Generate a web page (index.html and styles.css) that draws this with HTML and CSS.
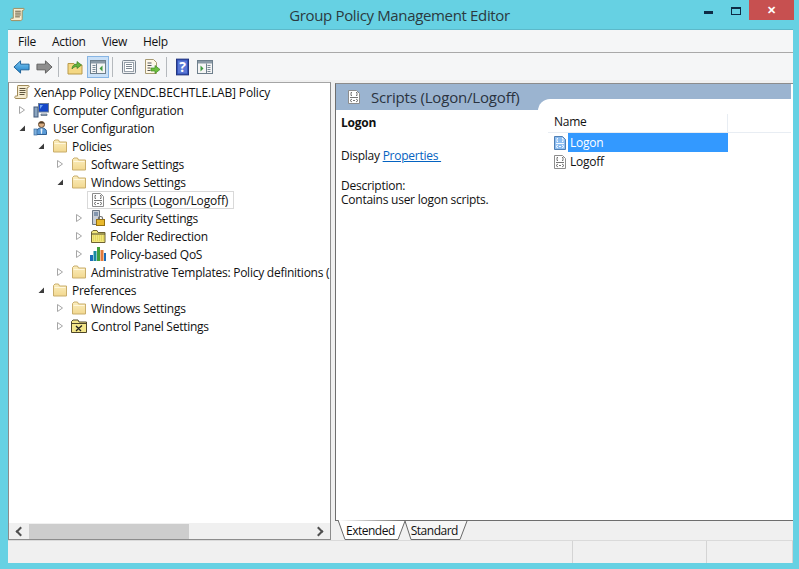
FILE: index.html
```html
<!DOCTYPE html>
<html lang="en">

<head>
    <meta charset="UTF-8">
    <title>Group Policy Management Editor</title>
    <link rel="stylesheet" href="styles.css">
</head>

<body>

    <!-- icon set -->
    <svg class="defs" width="0" height="0">
        <defs>
            <linearGradient id="blueArrow" x1="0" y1="0" x2="0" y2="1">
                <stop offset="0" stop-color="#7cc8f2" />
                <stop offset="1" stop-color="#1c7fc8" />
            </linearGradient>
            <linearGradient id="folderFill" x1="0" y1="0" x2="0" y2="1">
                <stop offset="0" stop-color="#fbeebf" />
                <stop offset="1" stop-color="#f2d88f" />
            </linearGradient>
        </defs>
        <symbol id="i-scroll" viewBox="0 0 16 16">
            <path d="M4 1.5h10.500c.8 0 1 1 .3 1.500L13 4v8.500c0 1.500-1 2-2 2H2c-1.500 0-1.800-2-.3-2.500H3.500V3C3.500 2 3.500 1.500 4 1.500z" fill="#f6ecd0" stroke="#a08a58" />
            <path d="M5.500 4.500h6M5.500 6.500h6M5.500 8.500h6M5.500 10.500h5" stroke="#5f563f" />
        </symbol>
        <symbol id="i-folder" viewBox="0 0 16 16">
            <path d="M1.500 3.500V14h13V4h-7l-1-2H3z" fill="url(#folderFill)" stroke="#c9ad6b" />
            <path d="M2.500 5.500h11" stroke="#fff7dc" />
        </symbol>
        <symbol id="i-script" viewBox="0 0 16 16">
            <path d="M2.500 1.500h8l3 3v10h-11z" fill="#fff" stroke="#8d8d8d" />
            <path d="M6 3.500H5v3h1M10 3.500h1v3h-1M4 8.500h8M6 10l-2 1.500L6 13M10 10l2 1.500-2 1.500M7 11.500h2" fill="none" stroke="#666" stroke-width=".9" />
        </symbol>
        <symbol id="i-script-sel" viewBox="0 0 16 16">
            <path d="M2.500 1.500h8l3 3v10h-11z" fill="#8dbdf0" stroke="#4f7fb5" />
            <path d="M6 3.500H5v3h1M10 3.500h1v3h-1M4 8.500h8M6 10l-2 1.500L6 13M10 10l2 1.500-2 1.500M7 11.500h2" fill="none" stroke="#fff" stroke-width=".9" />
        </symbol>
        <symbol id="i-computer" viewBox="0 0 16 16">
            <rect x="1" y="5" width="4" height="10" fill="#8ba5bf" stroke="#41597a" />
            <rect x="5.500" y="1.500" width="10" height="8.500" fill="#1447c8" stroke="#6d7f95" />
            <path d="M7 3h3l-3 4z" fill="#6ea5f5" />
            <path d="M8 12h6v1.500H8z" fill="#9fb0c2" stroke="#52657c" stroke-width=".7" />
        </symbol>
        <symbol id="i-user" viewBox="0 0 16 16">
            <circle cx="8.500" cy="4.500" r="3" fill="#d7ac82" stroke="#6b4c2f" />
            <path d="M5.500 3.500c1-2.500 5-2.500 6 0z" fill="#4d3a26" />
            <path d="M3.500 14.500v-3c0-2 2-3.500 5-3.500s5 1.500 5 3.500v3z" fill="#5a9ad6" stroke="#2f5f92" />
            <path d="M7.500 8.500h2L9 13.500l-.5.5-.5-.5z" fill="#e8f2fb" />
            <rect x="1" y="9" width="3" height="6" fill="#7fb0dc" stroke="#3a6c9e" stroke-width=".7" />
        </symbol>
        <symbol id="i-security" viewBox="0 0 16 16">
            <path d="M2.500 .5h7v14h-7z" fill="#c8ced6" stroke="#6b7683" />
            <path d="M4 3h4M4 5h4" stroke="#3f5f86" />
            <rect x="6.500" y="9.500" width="8" height="6" fill="#e8b92e" stroke="#96700f" />
            <path d="M8.500 9.500V8c0-2 4-2 4 0v1.500" fill="none" stroke="#6f6f6f" stroke-width="1.200" />
        </symbol>
        <symbol id="i-redirect" viewBox="0 0 16 16">
            <path d="M1.500 4v10.500H15v-10H8l-1-2H3z" fill="#f1e77c" stroke="#6e6232" />
            <path d="M1.500 6H15" stroke="#4f4a2b" />
            <path d="M3 8h11M3 10h11M3 12h11" stroke="#d6c645" stroke-dasharray="1 1" />
        </symbol>
        <symbol id="i-qos" viewBox="0 0 16 16">
            <rect x="0" y="9" width="3" height="6" fill="#1b6cb8" />
            <rect x="3.500" y="5" width="3" height="10" fill="#178a9e" />
            <rect x="7" y="1" width="3" height="14" fill="#3e9e3c" />
            <rect x="10.500" y="4" width="3" height="11" fill="#e27a3c" />
            <rect x="14" y="7" width="2" height="8" fill="#1b6cb8" />
        </symbol>
        <symbol id="i-panel" viewBox="0 0 16 16">
            <path d="M.5 3.500v11h15V4H8L7 2H2z" fill="#f3e68a" stroke="#4d4528" />
            <path d="M1 5.500h14" stroke="#4d4528" />
            <path d="M5 8l2.500 2.500L11 7.500M7.500 10.500l2.500 2.500M5 13l2.500-2.500" fill="none" stroke="#222" stroke-width="1.300" />
        </symbol>
        <symbol id="i-back" viewBox="0 0 18 16">
            <path d="M1 8l7-6.500V5h9v6H8v3.500z" fill="url(#blueArrow)" stroke="#1a5f96" />
        </symbol>
        <symbol id="i-forward" viewBox="0 0 18 16">
            <path d="M17 8l-7-6.500V5H1v6h9v3.500z" fill="#8e8e8e" stroke="#5f5f5f" />
        </symbol>
        <symbol id="i-up" viewBox="0 0 16 16">
            <path d="M1 4.500V15h14V6H8L7 4.500z" fill="#f4d884" stroke="#b99a4a" />
            <path d="M5 10c0-3 2-5 5-5V2.500L14.500 6 10 9.500v-2c-2 0-4 1-5 2.500z" fill="#63b33c" stroke="#3d7d25" stroke-width=".7" />
        </symbol>
        <symbol id="i-pane" viewBox="0 0 16 14">
            <rect x=".5" y=".5" width="15" height="13" fill="#f5f5f5" stroke="#6e7f8c" />
            <rect x="1" y="1" width="14" height="2.500" fill="#8b9aa6" />
            <path d="M2.500 5.500h3M2.500 7.500h3M2.500 9.500h3M2.500 11.500h3" stroke="#7a8a96" />
            <path d="M6.500 3.500v10" stroke="#6e7f8c" />
            <path d="M12.500 5.500v6l-3-3z" fill="#3f9a3f" />
        </symbol>
        <symbol id="i-pane-right" viewBox="0 0 16 14">
            <rect x=".5" y=".5" width="15" height="13" fill="#f5f5f5" stroke="#6e7f8c" />
            <rect x="1" y="1" width="14" height="2.500" fill="#8b9aa6" />
            <path d="M10.500 5.500h3M10.500 7.500h3M10.500 9.500h3M10.500 11.500h3" stroke="#7a8a96" />
            <path d="M9.500 3.500v10" stroke="#6e7f8c" />
            <path d="M3.500 5.500v6l3-3z" fill="#3f9a3f" />
        </symbol>
        <symbol id="i-props" viewBox="0 0 16 16">
            <rect x="1.500" y="1.500" width="13" height="13" rx="1" fill="#eef0f2" stroke="#7d8791" />
            <rect x="3.500" y="3.500" width="9" height="9" fill="#fff" stroke="#9aa3ac" />
            <path d="M5 5.500h6M5 7.500h6M5 9.500h6" stroke="#7d8791" />
        </symbol>
        <symbol id="i-export" viewBox="0 0 16 16">
            <path d="M1.500 .5h8l3 3v5M12.500 13.500v1h-11V.5" fill="#fff8e6" stroke="#a79a72" />
            <path d="M3.500 4h4M3.500 6.500h4M3.500 9h3M3.500 11.500h3" stroke="#555" />
            <path d="M7 9h4V6.500l5 4-5 4V12H7z" fill="#6dbf3f" stroke="#3f8a22" stroke-width=".7" />
        </symbol>
        <symbol id="i-help" viewBox="0 0 14 18">
            <rect x=".5" y=".5" width="13" height="17" fill="#2e4fb5" stroke="#1c2f7a" />
            <rect x="2" y="2" width="10" height="14" fill="#5b78d6" />
        </symbol>
        <symbol id="i-open" viewBox="0 0 10 10">
            <path d="M8 2.500V8H2.500z" fill="#3c3c3c" />
        </symbol>
        <symbol id="i-closed" viewBox="0 0 10 10">
            <path d="M2.500 1.500l5 3.500-5 3.500z" fill="#fff" stroke="#a6a6a6" />
        </symbol>
    </svg>

    <div class="window">

        <div class="titlebar">
            <svg class="title-icon"><use href="#i-scroll" /></svg>
            <div class="title-text">Group Policy Management Editor</div>
            <div class="title-buttons">
                <span class="btn-min"></span>
                <span class="btn-max"></span>
                <span class="btn-close">&#10005;</span>
            </div>
        </div>

        <div class="client">

            <div class="menubar">
                <span>File</span>
                <span>Action</span>
                <span>View</span>
                <span>Help</span>
            </div>

            <div class="toolbar">
                <svg class="tool tool-arrow"><use href="#i-back" /></svg>
                <svg class="tool tool-arrow tool-forward"><use href="#i-forward" /></svg>
                <span class="sep"></span>
                <svg class="tool tool-up"><use href="#i-up" /></svg>
                <span class="tool-active"><svg class="tool-pane"><use href="#i-pane" /></svg></span>
                <span class="sep sep-tight"></span>
                <svg class="tool tool-props"><use href="#i-props" /></svg>
                <svg class="tool tool-export"><use href="#i-export" /></svg>
                <span class="sep sep-help"></span>
                <span class="tool-help"><svg><use href="#i-help" /></svg><b>?</b></span>
                <svg class="tool-pane tool-last"><use href="#i-pane-right" /></svg>
            </div>

            <div class="panes">

                <div class="left-pane">
                    <div class="tree">
                        <div class="row root"><svg class="icon"><use href="#i-scroll" /></svg><span>XenApp Policy [XENDC.BECHTLE.LAB] Policy</span></div>
                        <div class="row l1"><svg class="arrow"><use href="#i-closed" /></svg><svg class="icon"><use href="#i-computer" /></svg><span>Computer Configuration</span></div>
                        <div class="row l1"><svg class="arrow"><use href="#i-open" /></svg><svg class="icon"><use href="#i-user" /></svg><span>User Configuration</span></div>
                        <div class="row l2"><svg class="arrow"><use href="#i-open" /></svg><svg class="icon"><use href="#i-folder" /></svg><span>Policies</span></div>
                        <div class="row l3"><svg class="arrow"><use href="#i-closed" /></svg><svg class="icon"><use href="#i-folder" /></svg><span>Software Settings</span></div>
                        <div class="row l3"><svg class="arrow"><use href="#i-open" /></svg><svg class="icon"><use href="#i-folder" /></svg><span>Windows Settings</span></div>
                        <div class="row l4"><span class="no-arrow"></span><span class="current"><svg class="icon"><use href="#i-script" /></svg><span>Scripts (Logon/Logoff)</span></span></div>
                        <div class="row l4"><svg class="arrow"><use href="#i-closed" /></svg><svg class="icon"><use href="#i-security" /></svg><span>Security Settings</span></div>
                        <div class="row l4"><svg class="arrow"><use href="#i-closed" /></svg><svg class="icon"><use href="#i-redirect" /></svg><span>Folder Redirection</span></div>
                        <div class="row l4"><svg class="arrow"><use href="#i-closed" /></svg><svg class="icon"><use href="#i-qos" /></svg><span>Policy-based QoS</span></div>
                        <div class="row l3"><svg class="arrow"><use href="#i-closed" /></svg><svg class="icon"><use href="#i-folder" /></svg><span>Administrative Templates: Policy definitions (</span></div>
                        <div class="row l2"><svg class="arrow"><use href="#i-open" /></svg><svg class="icon"><use href="#i-folder" /></svg><span>Preferences</span></div>
                        <div class="row l3"><svg class="arrow"><use href="#i-closed" /></svg><svg class="icon"><use href="#i-folder" /></svg><span>Windows Settings</span></div>
                        <div class="row l3"><svg class="arrow"><use href="#i-closed" /></svg><svg class="icon"><use href="#i-panel" /></svg><span>Control Panel Settings</span></div>
                    </div>
                    <div class="hscroll">
                        <span class="chevron chevron-left"></span>
                        <div class="track"><div class="thumb"></div></div>
                        <span class="chevron chevron-right"></span>
                    </div>
                </div>

                <div class="right-pane">
                    <div class="detail">
                        <div class="band">
                            <svg class="icon"><use href="#i-script" /></svg>
                            <span>Scripts (Logon/Logoff)</span>
                        </div>
                        <div class="detail-body">
                            <div class="extended">
                                <div class="ext-name">Logon</div>
                                <div class="ext-display">Display <a href="#">Properties&nbsp;</a></div>
                                <div class="ext-desc">Description:<br>Contains user logon scripts.</div>
                            </div>
                            <div class="list">
                                <div class="list-head"><div class="col-name">Name</div></div>
                                <div class="item selected"><svg class="icon"><use href="#i-script-sel" /></svg><span>Logon</span></div>
                                <div class="item"><svg class="icon"><use href="#i-script" /></svg><span>Logoff</span></div>
                            </div>
                        </div>
                    </div>
                    <div class="tabs">
                        <svg class="tab-shapes" width="140" height="19">
                            <path d="M70 0l6 18.500h49L132 0" fill="#f6f6f6" stroke="#6a6a6a" />
                            <path d="M3-1l7 19.500h53L70 0" fill="#fff" stroke="#6a6a6a" />
                        </svg>
                        <span class="tab tab-first">Extended</span>
                        <span class="tab">Standard</span>
                    </div>
                </div>

            </div>

            <div class="statusbar">
                <div class="cell cell-wide"></div>
                <div class="cell cell-mid"></div>
                <div class="cell cell-end"></div>
            </div>

        </div>
    </div>

</body>

</html>
```

FILE: styles.css
```css
body, html {
    margin: 0;
    padding: 0;
    height: 100%;
    overflow: hidden;
}

body {
    font-family: "Open Sans", "Noto Sans", sans-serif;
    font-size: 12px;
    letter-spacing: -0.25px;
    color: #111;
}

.defs {
    position: absolute;
}

.window {
    width: 799px;
    height: 569px;
    display: flex;
    flex-direction: column;
    background-color: #66d1e3;
}

/* title bar */
.titlebar {
    height: 29px;
    display: flex;
    flex-shrink: 0;
    position: relative;
    justify-content: center;
    align-items: center;
}

.title-icon {
    position: absolute;
    left: 10px;
    top: 7px;
    width: 15px;
    height: 15px;
}

.title-text {
    font-size: 15px;
    letter-spacing: -0.35px;
    color: #2b3a40;
}

.title-buttons {
    position: absolute;
    top: 0;
    right: 5px;
    display: flex;
    align-items: flex-start;
}

.btn-min {
    width: 9px;
    height: 3px;
    margin: 11px 18px 0 0;
    background-color: #0e2b45;
}

.btn-max {
    width: 8px;
    height: 5px;
    margin: 7px 8px 0 0;
    border: 1px solid #0e2b45;
    border-top-width: 2px;
}

.btn-close {
    width: 45px;
    height: 20px;
    background-color: #c75050;
    color: #fff;
    font-size: 11px;
    font-weight: bold;
    line-height: 20px;
    text-align: center;
}

/* client area */
.client {
    flex: 1;
    margin: 0 6px 6px 8px;
    display: flex;
    flex-direction: column;
    background-color: #f0f0f0;
    border-top: 1px solid #5cb9ca;
    min-height: 0;
}

.menubar {
    height: 22px;
    display: flex;
    align-items: center;
    flex-shrink: 0;
    padding-left: 10px;
    background-color: #f5f6f7;
    border-bottom: 1px solid #a9a9a9;
}

.menubar span {
    margin-right: 16px;
}

.toolbar {
    height: 27px;
    display: flex;
    align-items: center;
    flex-shrink: 0;
    padding-left: 5px;
    background-color: #f5f6f7;
}

.tool {
    width: 16px;
    height: 16px;
}

.tool-arrow {
    width: 17px;
}

.tool-forward {
    margin-left: 6px;
}

.sep {
    width: 1px;
    height: 20px;
    margin: 0 8px 0 5px;
    background-color: #b5b9bd;
}

.tool-active {
    width: 20px;
    height: 20px;
    margin-left: 4px;
    display: flex;
    align-items: center;
    justify-content: center;
    background-color: #c9e0f7;
    border: 1px solid #87b5e4;
}

.tool-pane {
    width: 16px;
    height: 14px;
}

.sep-tight {
    margin: 0 8px 0 3px;
}

.tool-export {
    margin-left: 7px;
}

.sep-help {
    margin: 0 9px 0 6px;
}

.tool-help {
    width: 13px;
    height: 18px;
    display: block;
    position: relative;
    color: #fff;
    text-align: center;
    font-size: 14px;
    line-height: 18px;
}

.tool-help svg {
    position: absolute;
    left: 0;
    top: 0;
    width: 13px;
    height: 18px;
}

.tool-help b {
    position: relative;
}

.tool-last {
    margin-left: 8px;
}

/* panes */
.panes {
    flex: 1;
    display: flex;
    padding-top: 2px;
    min-height: 0;
}

.left-pane {
    width: 323px;
    display: flex;
    flex-direction: column;
    box-sizing: border-box;
    background-color: #fff;
    border: 1px solid #8c8c8c;
    border-top-color: #a5a5a5;
    overflow: hidden;
}

.tree {
    flex: 1;
    overflow: hidden;
    white-space: nowrap;
}

.row {
    height: 18px;
    display: flex;
    align-items: center;
}

.root {
    padding-left: 5px;
    letter-spacing: -0.15px;
}

.l1 { padding-left: 8px; }
.l2 { padding-left: 27px; }
.l3 { padding-left: 46px; }
.l4 { padding-left: 65px; }

.arrow {
    width: 10px;
    height: 10px;
    margin-right: 6px;
    flex-shrink: 0;
}

.no-arrow {
    width: 13px;
    flex-shrink: 0;
}

.icon {
    width: 16px;
    height: 16px;
    margin-right: 4px;
    flex-shrink: 0;
}

.current {
    display: flex;
    align-items: center;
    height: 16px;
    padding: 0 5px 0 2px;
    border: 1px solid #d9d9d9;
    letter-spacing: -0.18px;
}

.hscroll {
    height: 16px;
    display: flex;
    align-items: center;
    flex-shrink: 0;
    background-color: #f0f0f0;
}

.chevron {
    width: 5px;
    height: 5px;
    border-left: 2px solid #505050;
    border-bottom: 2px solid #505050;
    flex-shrink: 0;
}

.chevron-left {
    margin: 0 5px 0 8px;
    transform: rotate(45deg);
}

.chevron-right {
    margin: 0 8px 0 5px;
    transform: rotate(225deg);
}

.track {
    flex: 1;
}

.thumb {
    width: 160px;
    height: 15px;
    background-color: #cdcdcd;
}

.right-pane {
    width: 458px;
    margin-left: 4px;
    display: flex;
    flex-direction: column;
}

.detail {
    flex: 1;
    display: flex;
    flex-direction: column;
    min-height: 0;
    margin-top: 1px;
    background-color: #fff;
    border-top: 1px solid #8c8c8c;
    border-left: 1px solid #6e6e6e;
    border-bottom: 1px solid #6e6e6e;
    padding-right: 2px;
}

.band {
    height: 26px;
    flex-shrink: 0;
    display: flex;
    align-items: center;
    padding-left: 10px;
    background-color: #9bb4d0;
    font-size: 15px;
    letter-spacing: -0.18px;
    color: #2a3340;
}

.band .icon {
    margin-right: 9px;
}

.detail-body {
    flex: 1;
    display: flex;
    min-height: 0;
}

.extended {
    width: 197px;
    padding-left: 5px;
    line-height: 14px;
}

.ext-name {
    margin-top: 6px;
    font-weight: bold;
}

.ext-display {
    margin-top: 19px;
}

.ext-display a {
    color: #0563c1;
}

.ext-desc {
    margin-top: 16px;
}

.list {
    flex: 1;
    margin-top: -11px;
    padding-left: 10px;
    background-color: #fff;
    border-top-left-radius: 12px;
}

.list-head {
    height: 34px;
    box-sizing: border-box;
    padding-top: 15px;
    border-bottom: 1px solid #e8edf3;
}

.col-name {
    width: 180px;
    height: 18px;
    padding-left: 6px;
    box-sizing: border-box;
    border-right: 1px solid #e8edf3;
    line-height: 16px;
}

.item {
    height: 19px;
    display: flex;
    align-items: center;
    padding-left: 4px;
}

.item .icon {
    margin-right: 0;
}

.item span {
    width: 160px;
    height: 19px;
    padding-left: 2px;
    box-sizing: border-box;
    line-height: 19px;
}

.selected span {
    background-color: #3399ff;
    color: #fff;
}

/* tabs */
.tabs {
    height: 19px;
    flex-shrink: 0;
    position: relative;
    display: flex;
    align-items: center;
    padding-left: 11px;
    background-color: #f0f0f0;
    letter-spacing: -0.5px;
}

.tab-shapes {
    position: absolute;
    left: 0;
    top: 0;
    overflow: visible;
}

.tab {
    position: relative;
}

.tab-first {
    margin-right: 16px;
}

.statusbar {
    height: 23px;
    display: flex;
    flex-shrink: 0;
    box-sizing: border-box;
    background-color: #f0f0f0;
    border-top: 1px solid #dadada;
}

.cell {
    border-right: 1px solid #d4d4d4;
}

.cell-wide { width: 564px; }
.cell-mid { width: 133px; }
.cell-end { width: 85px; }
```
